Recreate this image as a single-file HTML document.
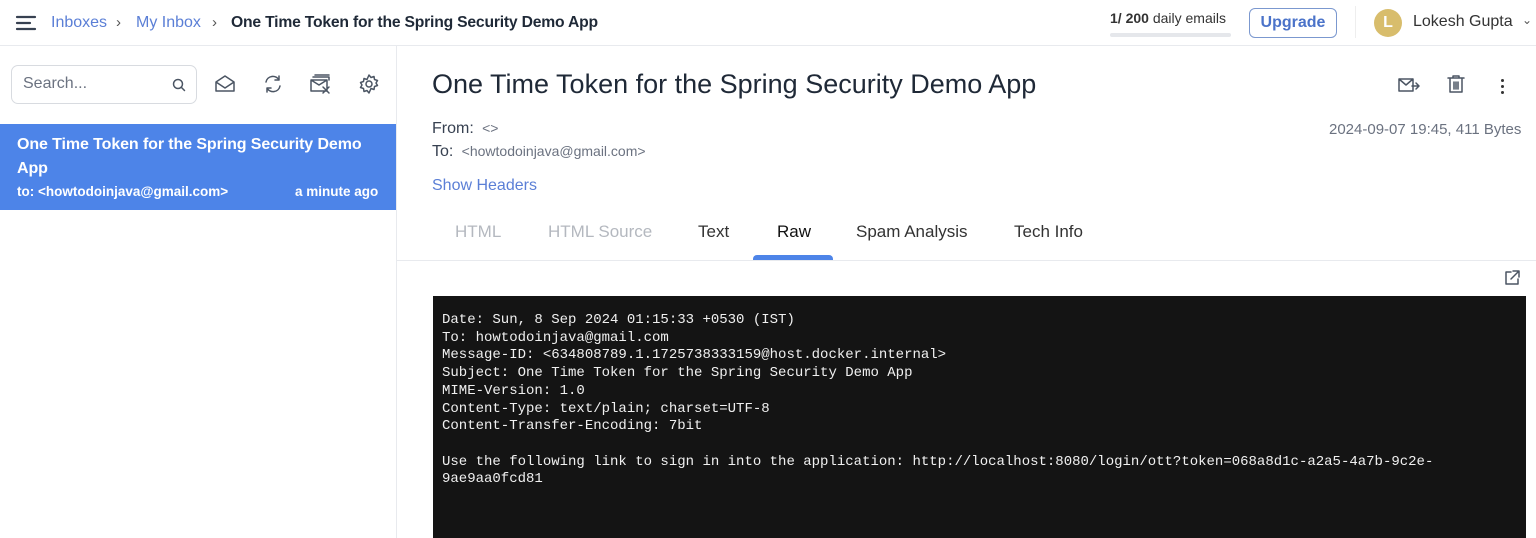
<!DOCTYPE html>
<html><head><meta charset="utf-8"><style>
*{box-sizing:border-box;margin:0;padding:0}
body{width:1536px;height:538px;overflow:hidden;background:#fff;font-family:"Liberation Sans",sans-serif;color:#1f2937;position:relative}
.a{position:absolute;white-space:nowrap}
svg{position:absolute;fill:none;stroke:#4b5563;stroke-width:1.5;stroke-linecap:round;stroke-linejoin:round}
.tab{position:absolute;top:222px;font-size:17px}
pre{font-family:"Liberation Mono",monospace;font-size:14px;line-height:17.7px;color:#f0f0f0;white-space:pre !important}
</style></head><body>
<div class="a" style="left:0;top:45px;width:1536px;height:1px;background:#e8eaee"></div>
<svg style="left:15px;top:14px" width="22" height="18" viewBox="0 0 22 18"><path d="M2 3h18M2 9h13M2 15h18" stroke="#374151" stroke-width="2.2"/></svg>
<div class="a" style="left:51px;top:14px;font-size:16px;color:#5b7fd6">Inboxes</div>
<div class="a" style="left:116px;top:14px;font-size:15px;color:#555">›</div>
<div class="a" style="left:136px;top:14px;font-size:16px;color:#5b7fd6">My Inbox</div>
<div class="a" style="left:212px;top:14px;font-size:15px;color:#555">›</div>
<div class="a" style="left:231px;top:14px;font-size:15.7px;font-weight:bold;color:#1f2937;letter-spacing:-0.2px">One Time Token for the Spring Security Demo App</div>
<div class="a" style="left:1110px;top:10px;font-size:14px;color:#333"><b>1/ 200</b> daily emails</div>
<div class="a" style="left:1110px;top:33px;width:121px;height:4px;border-radius:2px;background:#e5e7eb"></div>
<div class="a" style="left:1249px;top:8px;width:88px;height:30px;border:1px solid #7b98cf;border-radius:6px;font-size:16px;font-weight:bold;color:#4b73c9;text-align:center;line-height:28px">Upgrade</div>
<div class="a" style="left:1355px;top:6px;width:1px;height:32px;background:#eee"></div>
<div class="a" style="left:1374px;top:9px;width:28px;height:28px;border-radius:50%;background:#d8bd6c;color:#fff;font-size:16px;font-weight:bold;text-align:center;line-height:28px">L</div>
<div class="a" style="left:1413px;top:13px;font-size:16px;color:#333">Lokesh Gupta</div>
<div class="a" style="left:1522px;top:13px;font-size:12px;color:#555">⌄</div>
<div class="a" style="left:396px;top:46px;width:1px;height:492px;background:#e8eaee"></div>
<div class="a" style="left:11px;top:65px;width:186px;height:39px;border:1px solid #d8dbe0;border-radius:7px"></div>
<div class="a" style="left:23px;top:75px;font-size:16px;color:#6b7280">Search...</div>
<svg style="left:171px;top:77px" width="16" height="16" viewBox="0 0 16 16"><circle cx="7" cy="7" r="4.5"/><path d="M10.5 10.5l3 3"/></svg>
<svg style="left:214px;top:74px" width="22" height="20" viewBox="0 0 22 20"><path d="M2 8l9-6 9 6v9H2z M2 8l9 6 9-6"/></svg>
<svg style="left:262px;top:73px" width="22" height="22" viewBox="0 0 22 22"><path d="M4 9a7 7 0 0 1 13-2M18 13a7 7 0 0 1-13 2M17 3v4h-4M5 19v-4h4"/></svg>
<svg style="left:309px;top:73px" width="24" height="22" viewBox="0 0 24 22"><path d="M2 7h16v11H2zM2 7l8 5 8-5M4 4h16v3M6 2h14M14 14l6 6M20 14l-6 6"/></svg>
<svg style="left:358px;top:73px" width="22" height="22" viewBox="0 0 22 22"><circle cx="11" cy="11" r="3"/><path d="M11 2l2 2.5 3-1 .5 3 3 1-1.5 2.5 1.5 2.5-3 1-.5 3-3-1L11 20l-2-2.5-3 1-.5-3-3-1L4 12 2.5 9.5l3-1 .5-3 3 1z"/></svg>
<div class="a" style="left:0;top:124px;width:396px;height:86px;background:#4d84e8"></div>
<div class="a" style="left:17px;top:133px;font-size:16px;font-weight:bold;color:#fff;line-height:24px;white-space:normal;width:360px;letter-spacing:-0.1px">One Time Token for the Spring Security Demo App</div>
<div class="a" style="left:17px;top:184px;font-size:13.5px;font-weight:bold;color:#fff">to: &lt;howtodoinjava@gmail.com&gt;</div>
<div class="a" style="left:295px;top:184px;font-size:13.5px;font-weight:bold;color:#fff">a minute ago</div>
<div class="a" style="left:432px;top:69px;font-size:27px;color:#1f2937">One Time Token for the Spring Security Demo App</div>
<svg style="left:1397px;top:76px" width="24" height="18" viewBox="0 0 24 18"><path d="M2 3h14v12H2zM2 3l7 6 7-6M15 10h7M19 7l3 3-3 3"/></svg>
<svg style="left:1447px;top:74px" width="18" height="20" viewBox="0 0 18 20"><path d="M1 4h16M6 4V2h6v2M3 4v14h12V4M7 8v7M9 8v7M11 8v7"/></svg>
<div class="a" style="left:1501px;top:79px;width:3px;height:3px;border-radius:50%;background:#333;box-shadow:0 6px 0 #333,0 12px 0 #333"></div>
<div class="a" style="left:432px;top:120px;font-size:16px;color:#374151">From: <span style="font-size:14px;color:#6b7280">&nbsp;&lt;&gt;</span></div>
<div class="a" style="left:432px;top:143px;font-size:16px;color:#374151">To: <span style="font-size:14px;color:#6b7280">&nbsp;&lt;howtodoinjava@gmail.com&gt;</span></div>
<div class="a" style="left:1329px;top:121px;font-size:15px;color:#6b7280">2024-09-07 19:45, 411 Bytes</div>
<div class="a" style="left:432px;top:177px;font-size:16px;color:#5b7fd6">Show Headers</div>
<div class="tab" style="left:455px;color:#b4b8bf">HTML</div>
<div class="tab" style="left:548px;color:#b4b8bf">HTML Source</div>
<div class="tab" style="left:698px;color:#333">Text</div>
<div class="tab" style="left:777px;color:#111">Raw</div>
<div class="tab" style="left:856px;color:#333">Spam Analysis</div>
<div class="tab" style="left:1014px;color:#333">Tech Info</div>
<div class="a" style="left:753px;top:255px;width:80px;height:6px;border-radius:4px 4px 0 0;background:#4d84e8"></div>
<div class="a" style="left:397px;top:260px;width:1139px;height:1px;background:#e8eaee"></div>
<svg style="left:1503px;top:269px" width="18" height="18" viewBox="0 0 18 18"><path d="M8 3H3v12h12v-5M10 2h6v6M16 2L8 10"/></svg>
<div class="a" style="left:433px;top:296px;width:1093px;height:242px;background:#141414"></div>
<pre class="a" style="left:442px;top:312px">Date: Sun, 8 Sep 2024 01:15:33 +0530 (IST)
To: howtodoinjava@gmail.com
Message-ID: &lt;634808789.1.1725738333159@host.docker.internal&gt;
Subject: One Time Token for the Spring Security Demo App
MIME-Version: 1.0
Content-Type: text/plain; charset=UTF-8
Content-Transfer-Encoding: 7bit

Use the following link to sign in into the application: http://localhost:8080/login/ott?token=068a8d1c-a2a5-4a7b-9c2e-
9ae9aa0fcd81</pre>
</body></html>
